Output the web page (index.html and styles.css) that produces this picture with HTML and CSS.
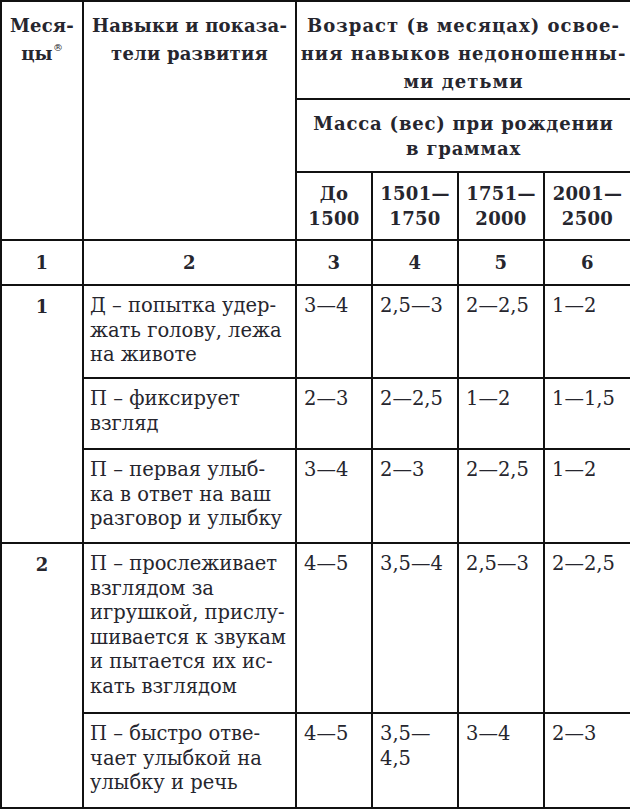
FILE: index.html
```html
<!DOCTYPE html>
<html lang="ru">
<head>
<meta charset="utf-8">
<title>Навыки недоношенных детей</title>
<link rel="stylesheet" href="styles.css">
</head>
<body>
<table class="grid">
  <colgroup>
    <col class="c1"><col class="c2"><col class="c3"><col class="c4"><col class="c5"><col class="c6">
  </colgroup>
  <thead>
    <tr class="h1">
      <th rowspan="3" class="top">Меся-<br>цы<sup>®</sup></th>
      <th rowspan="3" class="top">Навыки и показа-<br>тели развития</th>
      <th colspan="4" class="age">Возраст (в месяцах) освое-<br>ния навыков недоношенны-<br>ми детьми</th>
    </tr>
    <tr class="h2">
      <th colspan="4" class="mass">Масса (вес) при рождении<br>в граммах</th>
    </tr>
    <tr class="h3">
      <th>До<br>1500</th>
      <th>1501—<br>1750</th>
      <th>1751—<br>2000</th>
      <th>2001—<br>2500</th>
    </tr>
    <tr class="nums">
      <th>1</th><th>2</th><th>3</th><th>4</th><th>5</th><th>6</th>
    </tr>
  </thead>
  <tbody>
    <tr class="r1">
      <td rowspan="3" class="month">1</td>
      <td class="skill">Д – попытка удер-<br>жать голову, лежа<br>на животе</td>
      <td>3—4</td><td>2,5—3</td><td>2—2,5</td><td>1—2</td>
    </tr>
    <tr class="r2">
      <td class="skill">П – фиксирует<br>взгляд</td>
      <td>2—3</td><td>2—2,5</td><td>1—2</td><td>1—1,5</td>
    </tr>
    <tr class="r3">
      <td class="skill">П – первая улыб-<br>ка в ответ на ваш<br>разговор и улыбку</td>
      <td>3—4</td><td>2—3</td><td>2—2,5</td><td>1—2</td>
    </tr>
    <tr class="r4">
      <td rowspan="2" class="month">2</td>
      <td class="skill">П – прослеживает<br>взглядом за<br>игрушкой, прислу-<br>шивается к звукам<br>и пытается их ис-<br>кать взглядом</td>
      <td>4—5</td><td>3,5—4</td><td>2,5—3</td><td>2—2,5</td>
    </tr>
    <tr class="r5">
      <td class="skill">П – быстро отве-<br>чает улыбкой на<br>улыбку и речь</td>
      <td>4—5</td><td>3,5—<br>4,5</td><td>3—4</td><td>2—3</td>
    </tr>
  </tbody>
</table>
</body>
</html>
```

FILE: styles.css
```css
html, body {
  margin: 0;
  padding: 0;
  background: #ffffff;
}

body {
  font-family: "DejaVu Serif", "Liberation Serif", serif;
  color: #26262e;
}

.grid {
  border-collapse: collapse;
  table-layout: fixed;
  width: 630px;
}

.c1 { width: 82px; }
.c2 { width: 213px; }
.c3 { width: 76px; }
.c4 { width: 86px; }
.c5 { width: 86px; }
.c6 { width: 87px; }

.grid th,
.grid td {
  border: 2px solid #111111;
  padding: 0;
  overflow: hidden;
  white-space: nowrap;
}

.grid th {
  font-weight: bold;
  font-size: 18px;
  letter-spacing: 0.3px;
  line-height: 25px;
  text-align: center;
  vertical-align: middle;
}

.grid th.top {
  vertical-align: top;
  padding-top: 10px;
  line-height: 28px;
  letter-spacing: 0.2px;
}

.grid th.age {
  line-height: 28px;
  padding-top: 8px;
  letter-spacing: 1px;
}

.grid th.mass {
  letter-spacing: 0.8px;
}

.grid th sup {
  font-size: 10px;
  font-weight: normal;
  letter-spacing: 0;
  vertical-align: 9px;
  line-height: 0;
}

.h1 { height: 98px; }
.h2 { height: 73px; }
.h3 { height: 68px; }
.nums { height: 45px; }

.grid td {
  font-size: 19.5px;
  line-height: 24.5px;
  vertical-align: top;
  padding: 8px 4px 0 7px;
}

.grid td.skill {
  padding-left: 6px;
}

.grid td.month {
  text-align: center;
  font-weight: bold;
  font-size: 18px;
  padding-left: 0;
  padding-right: 0;
  padding-top: 9px;
}

.r1 { height: 93px; }
.r2 { height: 71px; }
.r3 { height: 94px; }
.r4 { height: 170px; }
.r5 { height: 95px; }
```
